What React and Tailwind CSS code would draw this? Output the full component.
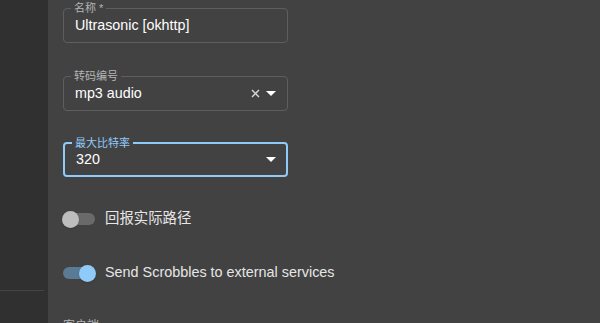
import React, { useState } from 'react';

const font = "font-['Liberation_Sans','Noto_Sans_CJK_SC',sans-serif]";

const Caret = () => (
  <svg width="10" height="5" viewBox="0 0 10 5" className="block">
    <path d="M0 0 L10 0 L5 5 Z" fill="#ffffff" />
  </svg>
);

const Cross = () => (
  <svg width="9" height="9" viewBox="0 0 9 9" className="block">
    <path d="M1 1 L8 8 M8 1 L1 8" stroke="#d8d8d8" strokeWidth="1.4" />
  </svg>
);

const Field = ({ label, value, focused, clearable, select }) => (
  <div
    className={
      'relative flex h-[35px] w-[225px] items-center rounded-[4px] pl-[11px] ' +
      (focused ? 'border-2 border-[#90caf9] pr-[10px]' : 'border border-[#5e5e5e] pr-[11px]')
    }
  >
    <span
      className={
        'absolute left-[7px] top-[-8px] bg-[#424242] px-[3px] text-[11px] leading-[14px] ' +
        (focused ? 'text-[#90caf9]' : 'text-[#b4b4b4]')
      }
    >
      {label}
    </span>
    <span className="flex-1 pt-[1px] text-[14.3px] text-white">{value}</span>
    {clearable && (
      <span className="mr-[6px]">
        <Cross />
      </span>
    )}
    {select && <Caret />}
  </div>
);

const Toggle = ({ on, onChange, label }) => (
  <button
    type="button"
    onClick={() => onChange(!on)}
    className="flex h-[24px] items-center text-left"
  >
    <span className="relative flex h-[20px] w-[32px] items-center">
      <span
        className={
          'h-[12px] w-[32px] rounded-full ' + (on ? 'bg-[#5b7a96]' : 'bg-[#6a6a6a]')
        }
      />
      <span
        className={
          'absolute top-[1.5px] h-[17px] w-[17px] rounded-full shadow ' +
          (on ? 'left-[16px] bg-[#90caf9]' : 'left-[-1px] bg-[#bdbdbd]')
        }
      />
    </span>
    <span className="ml-[10px] text-[14.4px] text-[#e6e6e6]">{label}</span>
  </button>
);

export default function App() {
  const [reportPath, setReportPath] = useState(false);
  const [scrobble, setScrobble] = useState(true);

  return (
    <div className={'flex h-[323px] w-[600px] overflow-hidden ' + font}>
      <aside className="flex w-[48px] flex-col bg-[#303030]">
        <div className="mt-[290px] h-px w-[44px] bg-[#444444]" />
      </aside>
      <main className="flex-1 bg-[#424242] pl-[15px] pt-[8px]">
        <Field label="名称 *" value="Ultrasonic [okhttp]" />
        <div className="mt-[33px]">
          <Field label="转码编号" value="mp3 audio" clearable select />
        </div>
        <div className="mt-[31px]">
          <Field label="最大比特率" value="320" focused select />
        </div>
        <div className="mt-[30px]">
          <Toggle on={reportPath} onChange={setReportPath} label="回报实际路径" />
        </div>
        <div className="mt-[30px]">
          <Toggle on={scrobble} onChange={setScrobble} label="Send Scrobbles to external services" />
        </div>
        <div className="mt-[32px] text-[12px] text-[#b4b4b4]">客户端</div>
      </main>
    </div>
  );
}
